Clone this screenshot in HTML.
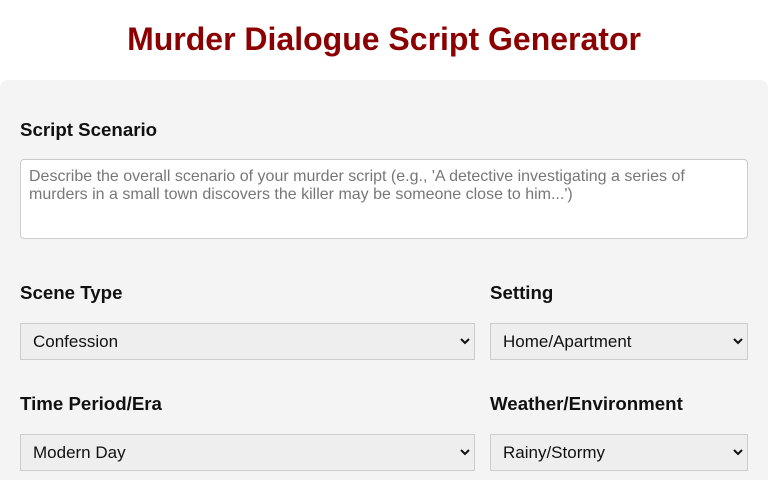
<!DOCTYPE html>
<html><head><style>
html,body{margin:0;width:768px;height:480px;overflow:hidden}
body{background:#fff;font-family:"Liberation Sans",sans-serif;position:relative}
h1{position:absolute;top:0;left:0;width:768px;margin:0;text-align:center;line-height:78px;font-size:32px;color:#8b0000;font-weight:bold}
.panel{position:absolute;left:0;top:80px;width:768px;height:400px;background:#f4f4f4;border-radius:8px 8px 0 0}
.l{position:absolute;font-weight:bold;font-size:18.7px;color:#111;line-height:22px}
.ta{position:absolute;left:20px;top:159px;width:710px;height:63px;background:#fff;border:1px solid #ccc;border-radius:4px;padding:8px 8px 7px;font-size:16px;line-height:18px;color:#777}
.s{position:absolute;height:35px;background:#eee;border:1px solid #ccc;box-sizing:border-box;font-size:17px;color:#111;line-height:35px;padding-left:12px}
.s svg{position:absolute;right:4px;top:13px}
</style></head><body>
<h1>Murder Dialogue Script Generator</h1>
<div class="panel"></div>
<div class="l" style="left:20px;top:119px">Script Scenario</div>
<div class="ta">Describe the overall scenario of your murder script (e.g., 'A detective investigating a series of murders in a small town discovers the killer may be someone close to him...')</div>
<div class="l" style="left:20px;top:282px">Scene Type</div>
<div class="l" style="left:490px;top:282px">Setting</div>
<div class="s" style="left:20px;top:323px;width:455px;height:37px">Confession<svg width="10" height="8"><path d="M1 2L5 6L9 2" stroke="#111" stroke-width="2" fill="none"/></svg></div>
<div class="s" style="left:490px;top:323px;width:258px;height:37px">Home/Apartment<svg width="10" height="8"><path d="M1 2L5 6L9 2" stroke="#111" stroke-width="2" fill="none"/></svg></div>
<div class="l" style="left:20px;top:393px">Time Period/Era</div>
<div class="l" style="left:490px;top:393px">Weather/Environment</div>
<div class="s" style="left:20px;top:434px;width:455px;height:37px">Modern Day<svg width="10" height="8"><path d="M1 2L5 6L9 2" stroke="#111" stroke-width="2" fill="none"/></svg></div>
<div class="s" style="left:490px;top:434px;width:258px;height:37px">Rainy/Stormy<svg width="10" height="8"><path d="M1 2L5 6L9 2" stroke="#111" stroke-width="2" fill="none"/></svg></div>
</body></html>
